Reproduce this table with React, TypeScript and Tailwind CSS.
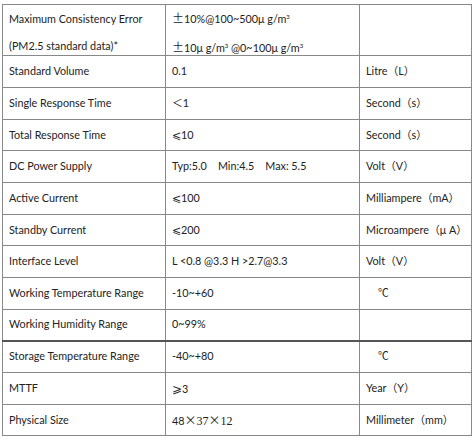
import React from "react";

const FONT = { fontFamily: 'Lato, "Noto Sans CJK SC", sans-serif' };

type Row = { name: React.ReactNode; value: React.ReactNode; unit: React.ReactNode; thick?: boolean };

const cjk = { fontFamily: '"Noto Sans CJK SC", sans-serif' };
const serif = { fontFamily: '"Liberation Serif", serif' };
const sup3 = <span className="relative -top-[4px] text-[6px]">3</span>;
const pm = <span className="inline-block w-[12px] text-[12px] leading-none" style={cjk}>±</span>;
const times = <span className="inline-block w-[12px] text-center text-[12px] leading-none" style={cjk}>×</span>;

const rows: Row[] = [
  { name: "Standard Volume", value: "0.1", unit: "Litre（L）" },
  { name: "Single Response Time", value: "＜1", unit: "Second（s）" },
  { name: "Total Response Time", value: "⩽10", unit: "Second（s）" },
  {
    name: "DC Power Supply",
    value: <span className="whitespace-pre">Typ:5.0    Min:4.5    Max: 5.5</span>,
    unit: "Volt（V）",
  },
  { name: "Active Current", value: "⩽100", unit: "Milliampere（mA）" },
  { name: "Standby Current", value: "⩽200", unit: "Microampere（μ A）" },
  { name: "Interface Level", value: "L <0.8 @3.3 H >2.7@3.3", unit: "Volt（V）" },
  { name: "Working Temperature Range", value: "-10~+60", unit: <span className="pl-[12px]">℃</span> },
  { name: "Working Humidity Range", value: "0~99%", unit: "" },
  { name: "Storage Temperature Range", value: "-40~+80", unit: <span className="pl-[12px]">℃</span>, thick: true },
  { name: "MTTF", value: <span><span className="text-[12px]" style={cjk}>⩾</span>3</span>, unit: "Year（Y）" },
  {
    name: "Physical Size",
    value: (
      <span>
        48{times}<span className="text-[12px]" style={serif}>37</span>{times}<span className="text-[12px]" style={serif}>12</span>
      </span>
    ),
    unit: "Millimeter（mm）",
  },
];

export default function App() {
  return (
    <div className="h-[440px] w-[474px] overflow-hidden bg-white pl-[2px] pt-[4px] text-[10.8px] text-[#222]" style={FONT}>
      <table className="w-[470px] table-fixed border-collapse">
        <colgroup>
          <col className="w-[163px]" />
          <col className="w-[194px]" />
          <col />
        </colgroup>
        <tbody>
          <tr>
            <td className="border border-[#888] px-[6px] align-top">
              <div className="h-[50px] whitespace-nowrap leading-[27px]">
                Maximum Consistency Error
                <br />
                (PM2.5 standard data)*
              </div>
            </td>
            <td className="border border-[#888] px-[6px] align-top">
              <div className="h-[50px] whitespace-nowrap leading-[27px]">
                {pm}10%@100~500μ g/m{sup3}
                <br />
                {pm}10μ g/m{sup3} @0~100μ g/m{sup3}
              </div>
            </td>
            <td className="border border-[#888]" />
          </tr>
          {rows.map((r, i) => {
            const cls = `whitespace-nowrap border border-[#888] px-[6px] leading-none ${r.thick ? "border-t-2 border-t-[#555]" : ""}`;
            return (
              <tr key={i} className={i % 3 === 2 ? "h-[31px]" : "h-[32px]"}>
                <td className={cls}>{r.name}</td>
                <td className={cls}>{r.value}</td>
                <td className={cls}>{r.unit}</td>
              </tr>
            );
          })}
        </tbody>
      </table>
    </div>
  );
}
